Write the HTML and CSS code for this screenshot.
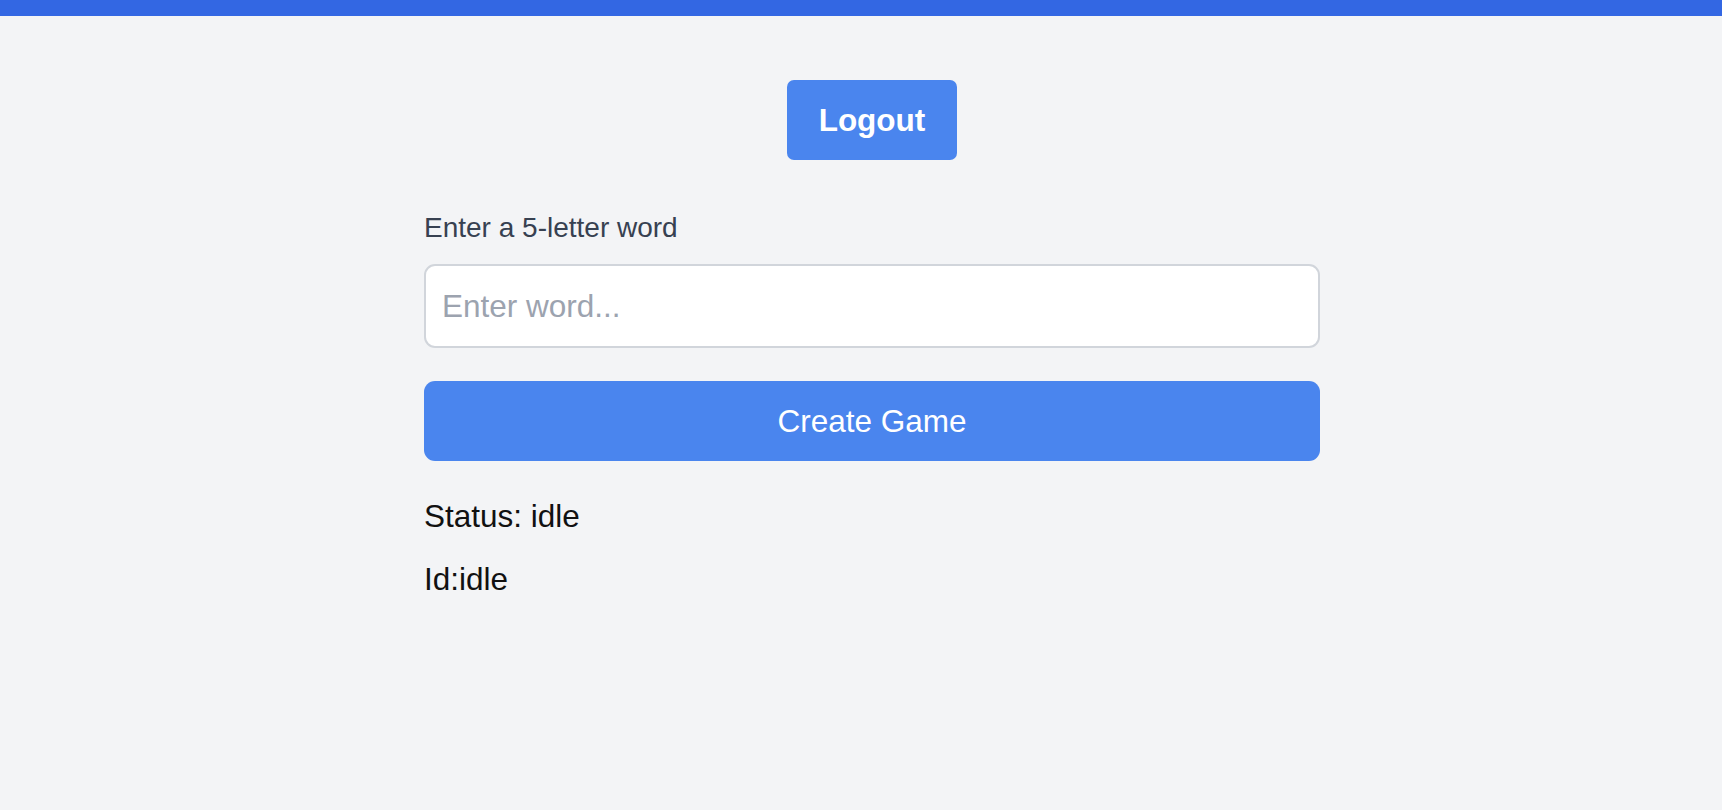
FILE: index.html
```html
<!DOCTYPE html>
<html lang="en">
<head>
<meta charset="utf-8">
<title>Create Game</title>
<link rel="stylesheet" href="styles.css">
</head>
<body>
<div class="topbar"></div>
<main class="page">
  <button class="logout" type="button">Logout</button>
  <form class="panel">
    <label class="label" for="word">Enter a 5-letter word</label>
    <input class="word" id="word" type="text" placeholder="Enter word...">
    <button class="create" type="button">Create Game</button>
    <p class="status">Status: idle</p>
    <p class="status status-id">Id:idle</p>
  </form>
</main>
</body>
</html>
```

FILE: styles.css
```css
html, body {
  margin: 0;
  padding: 0;
}

body {
  background: #f3f4f6;
  font-family: "Liberation Sans", Arial, sans-serif;
  min-height: 810px;
}

.topbar {
  height: 16px;
  background: #3367e3;
}

.page {
  display: flex;
  flex-direction: column;
  align-items: center;
  padding: 64px 0 0 22px;
}

.logout {
  height: 80px;
  padding: 0 32px;
  border: none;
  border-radius: 7px;
  background: #4a85ee;
  color: #ffffff;
  font-family: inherit;
  font-weight: 700;
  font-size: 31.5px;
  line-height: 36px;
  cursor: pointer;
}

.panel {
  width: 896px;
  margin-top: 52px;
  display: flex;
  flex-direction: column;
}

.label {
  display: block;
  font-size: 28px;
  line-height: 32px;
  color: #374151;
}

.word {
  margin-top: 20px;
  box-sizing: border-box;
  height: 84px;
  width: 100%;
  padding: 0 16px;
  border: 2px solid #d1d5db;
  border-radius: 11px;
  background: #ffffff;
  font-family: inherit;
  font-size: 31.5px;
  color: #111827;
  outline: none;
}

.word::placeholder {
  color: #9ca3af;
}

.create {
  margin-top: 33px;
  height: 80px;
  width: 100%;
  border: none;
  border-radius: 11px;
  background: #4a85ee;
  color: #ffffff;
  font-family: inherit;
  font-size: 31.5px;
  line-height: 36px;
  cursor: pointer;
}

.status {
  margin: 37px 0 0;
  font-size: 31.5px;
  line-height: 36px;
  color: #111111;
}

.status-id {
  margin-top: 27px;
}
```
